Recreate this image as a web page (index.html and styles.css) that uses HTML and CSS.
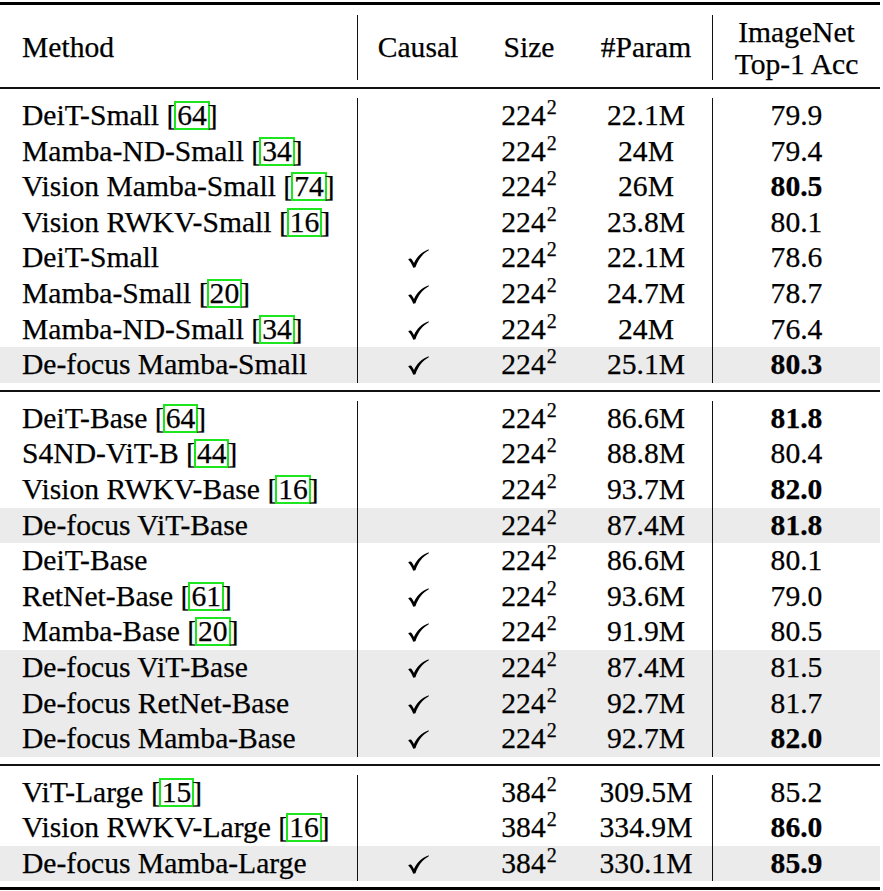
FILE: index.html
```html
<!DOCTYPE html>
<html>
<head>
<meta charset="utf-8">
<link rel="stylesheet" href="styles.css">
</head>
<body>
<div class="table">
  <div class="rule-top"></div>
  <div class="head">
    <div class="c c1">Method</div>
    <div class="c c2">Causal</div>
    <div class="c c3">Size</div>
    <div class="c c4">#Param</div>
    <div class="c c5 two">ImageNet<br>Top-1 Acc</div>
  </div>
  <div class="rule-mid"></div>

  <div class="group">
    <div class="row"><div class="c c1">DeiT-Small [<span class="cite">64</span>]</div><div class="c c2"></div><div class="c c3">224<span class="sup">2</span></div><div class="c c4">22.1M</div><div class="c c5">79.9</div></div>
    <div class="row"><div class="c c1">Mamba-ND-Small [<span class="cite">34</span>]</div><div class="c c2"></div><div class="c c3">224<span class="sup">2</span></div><div class="c c4">24M</div><div class="c c5">79.4</div></div>
    <div class="row"><div class="c c1">Vision Mamba-Small [<span class="cite">74</span>]</div><div class="c c2"></div><div class="c c3">224<span class="sup">2</span></div><div class="c c4">26M</div><div class="c c5 b">80.5</div></div>
    <div class="row"><div class="c c1">Vision RWKV-Small [<span class="cite">16</span>]</div><div class="c c2"></div><div class="c c3">224<span class="sup">2</span></div><div class="c c4">23.8M</div><div class="c c5">80.1</div></div>
    <div class="row"><div class="c c1">DeiT-Small</div><div class="c c2"><svg class="chk" viewBox="0 0 20 18"><path d="M0.2 9.9C1.5 8.6 3.1 8.9 3.9 10.3L5.7 13.3C8.3 7.6 12.4 3.1 19.7 0.2L19.8 1.2C13.8 4.6 9.8 9.7 7.1 17.3L5.0 17.9C3.9 14.8 2.4 11.8 0.2 9.9Z"/></svg></div><div class="c c3">224<span class="sup">2</span></div><div class="c c4">22.1M</div><div class="c c5">78.6</div></div>
    <div class="row"><div class="c c1">Mamba-Small [<span class="cite">20</span>]</div><div class="c c2"><svg class="chk" viewBox="0 0 20 18"><path d="M0.2 9.9C1.5 8.6 3.1 8.9 3.9 10.3L5.7 13.3C8.3 7.6 12.4 3.1 19.7 0.2L19.8 1.2C13.8 4.6 9.8 9.7 7.1 17.3L5.0 17.9C3.9 14.8 2.4 11.8 0.2 9.9Z"/></svg></div><div class="c c3">224<span class="sup">2</span></div><div class="c c4">24.7M</div><div class="c c5">78.7</div></div>
    <div class="row"><div class="c c1">Mamba-ND-Small [<span class="cite">34</span>]</div><div class="c c2"><svg class="chk" viewBox="0 0 20 18"><path d="M0.2 9.9C1.5 8.6 3.1 8.9 3.9 10.3L5.7 13.3C8.3 7.6 12.4 3.1 19.7 0.2L19.8 1.2C13.8 4.6 9.8 9.7 7.1 17.3L5.0 17.9C3.9 14.8 2.4 11.8 0.2 9.9Z"/></svg></div><div class="c c3">224<span class="sup">2</span></div><div class="c c4">24M</div><div class="c c5">76.4</div></div>
    <div class="row shade"><div class="c c1">De-focus Mamba-Small</div><div class="c c2"><svg class="chk" viewBox="0 0 20 18"><path d="M0.2 9.9C1.5 8.6 3.1 8.9 3.9 10.3L5.7 13.3C8.3 7.6 12.4 3.1 19.7 0.2L19.8 1.2C13.8 4.6 9.8 9.7 7.1 17.3L5.0 17.9C3.9 14.8 2.4 11.8 0.2 9.9Z"/></svg></div><div class="c c3">224<span class="sup">2</span></div><div class="c c4">25.1M</div><div class="c c5 b">80.3</div></div>
  </div>
  <div class="rule-mid"></div>

  <div class="group">
    <div class="row"><div class="c c1">DeiT-Base [<span class="cite">64</span>]</div><div class="c c2"></div><div class="c c3">224<span class="sup">2</span></div><div class="c c4">86.6M</div><div class="c c5 b">81.8</div></div>
    <div class="row"><div class="c c1">S4ND-ViT-B [<span class="cite">44</span>]</div><div class="c c2"></div><div class="c c3">224<span class="sup">2</span></div><div class="c c4">88.8M</div><div class="c c5">80.4</div></div>
    <div class="row"><div class="c c1">Vision RWKV-Base [<span class="cite">16</span>]</div><div class="c c2"></div><div class="c c3">224<span class="sup">2</span></div><div class="c c4">93.7M</div><div class="c c5 b">82.0</div></div>
    <div class="row shade"><div class="c c1">De-focus ViT-Base</div><div class="c c2"></div><div class="c c3">224<span class="sup">2</span></div><div class="c c4">87.4M</div><div class="c c5 b">81.8</div></div>
    <div class="row"><div class="c c1">DeiT-Base</div><div class="c c2"><svg class="chk" viewBox="0 0 20 18"><path d="M0.2 9.9C1.5 8.6 3.1 8.9 3.9 10.3L5.7 13.3C8.3 7.6 12.4 3.1 19.7 0.2L19.8 1.2C13.8 4.6 9.8 9.7 7.1 17.3L5.0 17.9C3.9 14.8 2.4 11.8 0.2 9.9Z"/></svg></div><div class="c c3">224<span class="sup">2</span></div><div class="c c4">86.6M</div><div class="c c5">80.1</div></div>
    <div class="row"><div class="c c1">RetNet-Base [<span class="cite">61</span>]</div><div class="c c2"><svg class="chk" viewBox="0 0 20 18"><path d="M0.2 9.9C1.5 8.6 3.1 8.9 3.9 10.3L5.7 13.3C8.3 7.6 12.4 3.1 19.7 0.2L19.8 1.2C13.8 4.6 9.8 9.7 7.1 17.3L5.0 17.9C3.9 14.8 2.4 11.8 0.2 9.9Z"/></svg></div><div class="c c3">224<span class="sup">2</span></div><div class="c c4">93.6M</div><div class="c c5">79.0</div></div>
    <div class="row"><div class="c c1">Mamba-Base [<span class="cite">20</span>]</div><div class="c c2"><svg class="chk" viewBox="0 0 20 18"><path d="M0.2 9.9C1.5 8.6 3.1 8.9 3.9 10.3L5.7 13.3C8.3 7.6 12.4 3.1 19.7 0.2L19.8 1.2C13.8 4.6 9.8 9.7 7.1 17.3L5.0 17.9C3.9 14.8 2.4 11.8 0.2 9.9Z"/></svg></div><div class="c c3">224<span class="sup">2</span></div><div class="c c4">91.9M</div><div class="c c5">80.5</div></div>
    <div class="row shade"><div class="c c1">De-focus ViT-Base</div><div class="c c2"><svg class="chk" viewBox="0 0 20 18"><path d="M0.2 9.9C1.5 8.6 3.1 8.9 3.9 10.3L5.7 13.3C8.3 7.6 12.4 3.1 19.7 0.2L19.8 1.2C13.8 4.6 9.8 9.7 7.1 17.3L5.0 17.9C3.9 14.8 2.4 11.8 0.2 9.9Z"/></svg></div><div class="c c3">224<span class="sup">2</span></div><div class="c c4">87.4M</div><div class="c c5">81.5</div></div>
    <div class="row shade"><div class="c c1">De-focus RetNet-Base</div><div class="c c2"><svg class="chk" viewBox="0 0 20 18"><path d="M0.2 9.9C1.5 8.6 3.1 8.9 3.9 10.3L5.7 13.3C8.3 7.6 12.4 3.1 19.7 0.2L19.8 1.2C13.8 4.6 9.8 9.7 7.1 17.3L5.0 17.9C3.9 14.8 2.4 11.8 0.2 9.9Z"/></svg></div><div class="c c3">224<span class="sup">2</span></div><div class="c c4">92.7M</div><div class="c c5">81.7</div></div>
    <div class="row shade"><div class="c c1">De-focus Mamba-Base</div><div class="c c2"><svg class="chk" viewBox="0 0 20 18"><path d="M0.2 9.9C1.5 8.6 3.1 8.9 3.9 10.3L5.7 13.3C8.3 7.6 12.4 3.1 19.7 0.2L19.8 1.2C13.8 4.6 9.8 9.7 7.1 17.3L5.0 17.9C3.9 14.8 2.4 11.8 0.2 9.9Z"/></svg></div><div class="c c3">224<span class="sup">2</span></div><div class="c c4">92.7M</div><div class="c c5 b">82.0</div></div>
  </div>
  <div class="rule-mid"></div>

  <div class="group last">
    <div class="row"><div class="c c1">ViT-Large [<span class="cite">15</span>]</div><div class="c c2"></div><div class="c c3">384<span class="sup">2</span></div><div class="c c4">309.5M</div><div class="c c5">85.2</div></div>
    <div class="row"><div class="c c1">Vision RWKV-Large [<span class="cite">16</span>]</div><div class="c c2"></div><div class="c c3">384<span class="sup">2</span></div><div class="c c4">334.9M</div><div class="c c5 b">86.0</div></div>
    <div class="row shade"><div class="c c1">De-focus Mamba-Large</div><div class="c c2"><svg class="chk" viewBox="0 0 20 18"><path d="M0.2 9.9C1.5 8.6 3.1 8.9 3.9 10.3L5.7 13.3C8.3 7.6 12.4 3.1 19.7 0.2L19.8 1.2C13.8 4.6 9.8 9.7 7.1 17.3L5.0 17.9C3.9 14.8 2.4 11.8 0.2 9.9Z"/></svg></div><div class="c c3">384<span class="sup">2</span></div><div class="c c4">330.1M</div><div class="c c5 b">85.9</div></div>
  </div>
  <div class="rule-top"></div>
</div>
</body>
</html>
```

FILE: styles.css
```css
html, body {
  margin: 0;
  padding: 0;
  background: #fff;
}
body {
  font-family: "Liberation Serif", "Times New Roman", serif;
  font-size: 29.6px;
  color: #000;
  -webkit-text-stroke: 0.25px #000;
}
.table {
  width: 880px;
  padding-top: 2px;
}
.rule-top {
  height: 3px;
  background: #000;
}
.rule-mid {
  height: 2px;
  background: #111;
}
.head {
  display: flex;
  align-items: stretch;
  height: 65px;
  padding: 10px 0 7px;
}
.head .c {
  display: flex;
  align-items: center;
  justify-content: center;
  line-height: 35.6px;
}
.head .c1 {
  justify-content: flex-start;
}
.head .two {
  line-height: 32px;
  text-align: center;
}
.group {
  padding: 9px 0 7px;
}
.group.last {
  padding-bottom: 6px;
}
.row {
  display: flex;
  height: 35.6px;
  line-height: 35.6px;
}
.shade {
  background: #ebebeb;
}
.c {
  box-sizing: border-box;
  white-space: nowrap;
  text-align: center;
}
.c1 {
  width: 358px;
  padding-left: 22px;
  text-align: left;
  border-right: 1px solid #111;
}
.c2 {
  width: 120px;
}
.c3 {
  width: 102px;
}
.c4 {
  width: 133px;
  border-right: 1px solid #111;
}
.c5 {
  width: 167px;
}
.b {
  font-weight: bold;
}
.sup {
  font-size: 20px;
  line-height: 0;
  vertical-align: 11px;
  margin-left: 1px;
}
.cite {
  display: inline-block;
  line-height: 25px;
  outline: 2.5px solid #1ee61e;
  outline-offset: 0;
  padding: 0 1px;
}
.chk {
  width: 21px;
  height: 19px;
  fill: #000;
  vertical-align: -1px;
}
```
